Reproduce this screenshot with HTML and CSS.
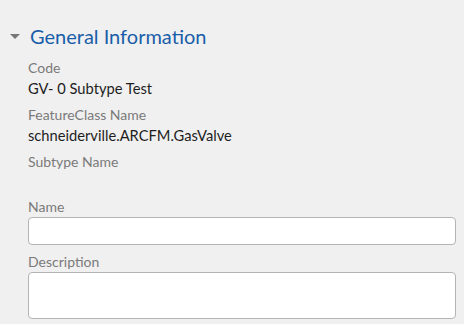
FILE: index.html
```html
<!DOCTYPE html>
<html lang="en">
<head>
    <meta charset="UTF-8">
    <title>General Information</title>
    <link rel="stylesheet" href="styles.css">
</head>
<body>
    <div class="section">
        <div class="section-header">
            <span class="caret"></span>
            <h2 class="section-title">General Information</h2>
        </div>

        <div class="section-body">
            <div class="field">
                <div class="field-label">Code</div>
                <div class="field-value">GV- 0 Subtype Test</div>
            </div>
            <div class="field">
                <div class="field-label">FeatureClass Name</div>
                <div class="field-value">schneiderville.ARCFM.GasValve</div>
            </div>
            <div class="field">
                <div class="field-label">Subtype Name</div>
                <div class="field-value empty"></div>
            </div>

            <!-- Editable fields -->
            <div class="field input-field">
                <label class="field-label" for="name">Name</label>
                <input class="text-input" id="name" type="text">
            </div>
            <div class="field input-field">
                <label class="field-label" for="description">Description</label>
                <textarea class="text-input text-area" id="description"></textarea>
            </div>
        </div>
    </div>
</body>
</html>
```

FILE: styles.css
```css
* {
    margin: 0;
    padding: 0;
    box-sizing: border-box;
}

body {
    font-family: Lato, 'Open Sans', sans-serif;
    background-color: #f0f0f0;
    color: #222;
    overflow: hidden;
}

.section {
    padding: 21px 8px 0 10px;
}

.section-header {
    display: flex;
    align-items: center;
    height: 30px;
}

.caret {
    width: 0;
    height: 0;
    border-left: 5px solid transparent;
    border-right: 5px solid transparent;
    border-top: 5px solid #777;
    margin-right: 10px;
}

.section-title {
    font-size: 20px;
    font-weight: normal;
    color: #1a5ea9;
}

.section-body {
    padding-left: 18px;
    padding-top: 7px;
}

.field-label {
    display: block;
    font-size: 14px;
    color: #7a7a7a;
    line-height: 20px;
}

.field-value {
    font-size: 14.7px;
    color: #1e1e1e;
    line-height: 20px;
    margin-bottom: 7px;
}

.field-value.empty {
    height: 18px;
}

.input-field {
    margin-bottom: 7px;
}

.text-input {
    display: block;
    width: 100%;
    height: 28px;
    background: #fff;
    border: 1px solid #b4b4b4;
    border-radius: 4px;
    font-family: inherit;
    font-size: 14px;
    padding: 4px 6px;
    resize: none;
    outline: none;
}

.text-area {
    height: 47px;
}
```
